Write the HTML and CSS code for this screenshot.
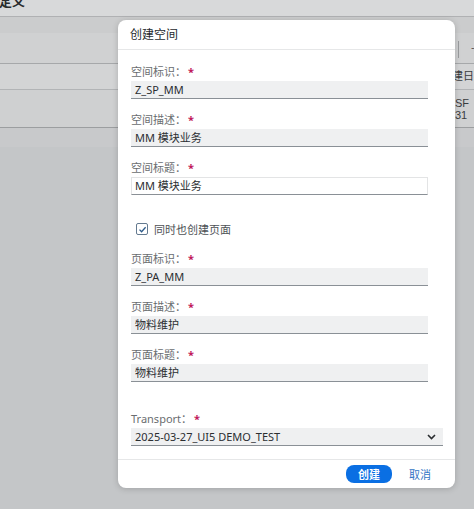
FILE: index.html
```html
<!DOCTYPE html>
<html lang="zh-CN">
<head>
    <meta charset="UTF-8">
    <meta name="viewport" content="width=device-width, initial-scale=1.0">
    <title>创建空间</title>
    <link rel="stylesheet" href="styles.css">
</head>
<body>

<!-- page behind the dialog -->
<div class="page">
    <div class="page-title"><span>建定义</span></div>
    <div class="toolbar"></div>
    <div class="filter-row">
        <div class="search-edge"><span class="dash">-</span></div>
    </div>
    <div class="table-head"><span class="cell-right">创建日期</span></div>
    <div class="table-row"><span class="cell-right">SF<br>31</span></div>
    <div class="table-foot"></div>
</div>

<div class="dialog">
    <div class="dialog-header">创建空间</div>

    <div class="dialog-body">
        <div class="field">
            <label class="label">空间标识：<span class="req">*</span></label>
            <div class="input">Z_SP_MM</div>
        </div>
        <div class="field">
            <label class="label">空间描述：<span class="req">*</span></label>
            <div class="input">MM 模块业务</div>
        </div>
        <div class="field">
            <label class="label">空间标题：<span class="req">*</span></label>
            <div class="input input-white">MM 模块业务</div>
        </div>

        <div class="check-row">
            <span class="checkbox">
                <svg width="9" height="9" viewBox="0 0 9 9"><path d="M1.5 4.6 L3.6 6.7 L7.6 2.2" fill="none" stroke="#2d5b8a" stroke-width="1.3"/></svg>
            </span>
            <span class="check-text">同时也创建页面</span>
        </div>

        <div class="field">
            <label class="label">页面标识：<span class="req">*</span></label>
            <div class="input">Z_PA_MM</div>
        </div>
        <div class="field">
            <label class="label">页面描述：<span class="req">*</span></label>
            <div class="input">物料维护</div>
        </div>
        <div class="field">
            <label class="label">页面标题：<span class="req">*</span></label>
            <div class="input">物料维护</div>
        </div>

        <div class="field field-transport">
            <label class="label">Transport：<span class="req">*</span></label>
            <div class="input select">
                <span>2025-03-27_UI5 DEMO_TEST</span>
                <svg width="9" height="6" viewBox="0 0 9 6"><path d="M1 1 L4.5 4.5 L8 1" fill="none" stroke="#2a2d30" stroke-width="1.6"/></svg>
            </div>
        </div>
    </div>

    <div class="dialog-footer">
        <button class="btn btn-primary">创建</button>
        <button class="btn btn-link">取消</button>
    </div>
</div>

</body>
</html>
```

FILE: styles.css
```css
body {
    margin: 0;
    font-family: "Noto Sans", "Noto Sans CJK SC", sans-serif;
    background: #c4c6c8;
    overflow: hidden;
}

/* background page */
.page {
    width: 474px;
    overflow: hidden;
    white-space: nowrap;
    font-family: "Liberation Sans", "Noto Sans CJK SC", sans-serif;
    color: #3a3c3e;
}
.page-title {
    height: 16px;
    background: #d8d9da;
    border-bottom: 1px solid #b0b1b3;
    overflow: hidden;
}
.page-title span {
    display: block;
    margin-top: -9px;
    font-size: 13px;
    font-weight: bold;
    color: #2a2c2e;
    margin-left: -14px;
}
.toolbar {
    height: 16px;
    background: #cbcccd;
}
.filter-row {
    height: 30px;
    background: #d0d1d2;
    border-bottom: 1px solid #a6a8aa;
    position: relative;
}
.search-edge {
    position: absolute;
    left: 458px;
    top: 8px;
    width: 30px;
    height: 17px;
    border-left: 1px solid #9a9c9e;
}
.dash {
    position: absolute;
    left: 12px;
    top: 0;
    font-size: 11px;
    color: #555;
}
.table-head {
    height: 25px;
    background: #d3d4d5;
    border-bottom: 1px solid #b2b4b6;
    font-size: 11px;
    line-height: 25px;
}
.table-row {
    height: 38px;
    box-sizing: border-box;
    padding-top: 7px;
    background: #cfd0d1;
    border-bottom: 1px solid #9c9ea0;
    font-size: 11px;
    line-height: 12px;
}
.table-head .cell-right { margin-left: 441px; }
.table-row .cell-right { display: block; margin-left: 455px; }
.table-foot {
    height: 19px;
    background: #c8c9cb;
}

/* dialog */
.dialog {
    position: absolute;
    left: 118px;
    top: 20px;
    width: 337px;
    height: 468px;
    background: #fff;
    border-radius: 8px;
    box-shadow: 0 1px 6px rgba(0, 0, 0, 0.18);
    display: flex;
    flex-direction: column;
}
.dialog-header {
    height: 29px;
    line-height: 29px;
    padding-left: 12px;
    font-size: 12px;
    color: #262a2e;
    border-bottom: 1px solid #e6e7e8;
}
.dialog-body {
    flex: 1;
    padding: 14px 0 0 13px;
}
.field {
    margin-bottom: 13px;
}
.label {
    display: block;
    height: 16px;
    line-height: 16px;
    margin-bottom: 1px;
    font-size: 11px;
    color: #6a6d70;
}
.req {
    color: #c0185a;
    font-weight: bold;
    margin-left: 2px;
}
.input {
    width: 297px;
    height: 18px;
    box-sizing: border-box;
    background: #eff0f1;
    border-bottom: 1px solid #8a9096;
    padding-left: 4px;
    font-size: 11px;
    line-height: 17px;
    color: #2b2e31;
}
.input-white {
    background: #fff;
    border: 1px solid #e3e4e5;
    border-bottom: 1px solid #8a9096;
    line-height: 16px;
    padding-left: 3px;
}
.check-row {
    display: flex;
    align-items: center;
    gap: 6px;
    height: 20px;
    margin: 24px 0 12px 5px;
}
.checkbox {
    width: 10px;
    height: 10px;
    border: 1px solid #647a90;
    border-radius: 2px;
    display: flex;
    align-items: center;
    justify-content: center;
}
.check-text {
    font-size: 11px;
    color: #4e5256;
}
.field-transport {
    margin-top: 29px;
}
.select {
    width: 312px;
    display: flex;
    align-items: center;
    justify-content: space-between;
    padding-right: 7px;
}

.dialog-footer {
    height: 28px;
    border-top: 1px solid #e6e7e8;
    display: flex;
    align-items: center;
    justify-content: flex-end;
    gap: 5px;
    padding-right: 12px;
}
.btn {
    width: 46px;
    height: 18px;
    border: none;
    border-radius: 8px;
    font-family: "Noto Sans CJK SC", sans-serif;
    font-size: 11px;
    padding: 0;
    cursor: pointer;
}
.btn-primary {
    background: #0a6fe3;
    color: #fff;
    font-weight: bold;
}
.btn-link {
    background: transparent;
    color: #3474c4;
}
```
